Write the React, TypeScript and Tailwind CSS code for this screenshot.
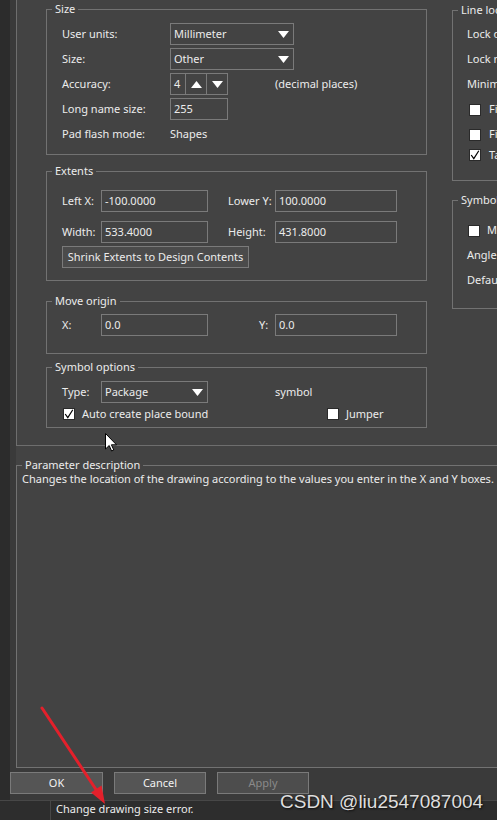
import React from "react";

function Group({
  title,
  className,
  children,
}: {
  title: string;
  className?: string;
  children: React.ReactNode;
}) {
  return (
    <fieldset className={`m-0 min-w-0 border border-[#727272] p-0 ${className ?? ""}`}>
      <legend className="ml-[5px] px-[3px] leading-[14px]">{title}</legend>
      {children}
    </fieldset>
  );
}

function Down() {
  return (
    <svg width="11" height="7" viewBox="0 0 11 7" className="shrink-0">
      <polygon points="0,0 11,0 5.5,7" fill="#ffffff" />
    </svg>
  );
}

function Up() {
  return (
    <svg width="11" height="7" viewBox="0 0 11 7" className="shrink-0">
      <polygon points="0,7 11,7 5.5,0" fill="#ffffff" />
    </svg>
  );
}

function Field({ value, className }: { value: string; className?: string }) {
  return (
    <div className={`flex h-[22px] items-center border border-[#7a7a7a] pl-[3px] ${className ?? ""}`}>
      {value}
    </div>
  );
}

function Combo({ value, className }: { value: string; className?: string }) {
  return (
    <div
      className={`flex h-[22px] items-center justify-between border border-[#7a7a7a] pl-[3px] pr-[4px] ${className ?? ""}`}
    >
      <span>{value}</span>
      <Down />
    </div>
  );
}

function Check({ checked, className }: { checked?: boolean; className?: string }) {
  return (
    <span
      className={`flex h-[12px] w-[12px] shrink-0 items-center justify-center border border-[#2a2a2a] bg-white ${className ?? ""}`}
    >
      {checked && (
        <svg width="10" height="10" viewBox="0 0 10 10">
          <polyline points="1.2,5 3.8,8.6 8.8,0.8" fill="none" stroke="#000" strokeWidth="1.2" />
        </svg>
      )}
    </span>
  );
}

function Btn({ label, disabled, className }: { label: string; disabled?: boolean; className?: string }) {
  return (
    <div
      className={`flex h-[22px] items-center justify-center border border-[#7a7a7a] ${
        disabled ? "bg-[#4d4d4d] text-[#8a8a8a]" : "bg-[#555555] text-[#f2f2f2]"
      } ${className ?? "w-[92px]"}`}
    >
      {label}
    </div>
  );
}

export default function App() {
  return (
    <div className="relative flex h-[820px] w-[497px] flex-col overflow-hidden bg-[#2c2c2c] font-['Noto_Sans',sans-serif] text-[11px] text-[#ececec]">
      <div className="flex h-[800px]">
        <div className="w-[10px] shrink-0 bg-[#2c2c2c]" />
        <div className="flex min-w-0 flex-1 flex-col bg-[#3a3a3a]">
          <div className="ml-[6px] flex h-[768px] flex-col overflow-hidden bg-[#434343]">
            {/* options page */}
            <div className="flex h-[446px] shrink-0 border-b border-l border-[#6e6e6e] pt-[2px]">
              <div className="ml-[29px] flex w-[381px] shrink-0 flex-col">
                <Group title="Size">
                  <div className="flex flex-col gap-[3px] px-[15px] pb-[9px] pt-[7px]">
                    <div className="flex h-[22px] items-center">
                      <span className="w-[108px]">User units:</span>
                      <Combo value="Millimeter" className="w-[124px]" />
                    </div>
                    <div className="flex h-[22px] items-center">
                      <span className="w-[108px]">Size:</span>
                      <Combo value="Other" className="w-[124px]" />
                    </div>
                    <div className="flex h-[22px] items-center">
                      <span className="w-[108px]">Accuracy:</span>
                      <div className="flex h-[22px] w-[58px] border border-[#7a7a7a]">
                        <span className="flex w-[14px] items-center pl-[3px]">4</span>
                        <span className="flex w-[21px] items-center justify-center border-l border-[#7a7a7a]">
                          <Up />
                        </span>
                        <span className="flex flex-1 items-center justify-center border-l border-[#7a7a7a]">
                          <Down />
                        </span>
                      </div>
                      <span className="ml-[47px]">(decimal places)</span>
                    </div>
                    <div className="flex h-[22px] items-center">
                      <span className="w-[108px]">Long name size:</span>
                      <Field value="255" className="w-[58px]" />
                    </div>
                    <div className="flex h-[22px] items-center">
                      <span className="w-[108px]">Pad flash mode:</span>
                      <span>Shapes</span>
                    </div>
                  </div>
                </Group>

                <Group title="Extents" className="mt-[9px]">
                  <div className="flex flex-col px-[15px] pb-[12px] pt-[12px]">
                    <div className="flex h-[22px] items-center">
                      <span className="w-[39px]">Left X:</span>
                      <Field value="-100.0000" className="w-[107px]" />
                      <span className="ml-[20px] w-[47px]">Lower Y:</span>
                      <Field value="100.0000" className="w-[122px]" />
                    </div>
                    <div className="mt-[9px] flex h-[22px] items-center">
                      <span className="w-[39px]">Width:</span>
                      <Field value="533.4000" className="w-[107px]" />
                      <span className="ml-[20px] w-[47px]">Height:</span>
                      <Field value="431.8000" className="w-[122px]" />
                    </div>
                    <div className="mt-[3px] flex h-[22px] w-[187px] items-center justify-center border border-[#7a7a7a] bg-[#4b4b4b]">
                      Shrink Extents to Design Contents
                    </div>
                  </div>
                </Group>

                <Group title="Move origin" className="mt-[13px]">
                  <div className="flex px-[15px] pb-[17px] pt-[6px]">
                    <div className="flex h-[22px] items-center">
                      <span className="w-[39px]">X:</span>
                      <Field value="0.0" className="w-[107px]" />
                      <span className="ml-[51px] w-[16px]">Y:</span>
                      <Field value="0.0" className="w-[122px]" />
                    </div>
                  </div>
                </Group>

                <Group title="Symbol options" className="mt-[6px]">
                  <div className="flex flex-col px-[15px] pb-[6px] pt-[7px]">
                    <div className="flex h-[22px] items-center">
                      <span className="w-[39px]">Type:</span>
                      <Combo value="Package" className="w-[107px]" />
                      <span className="ml-[67px]">symbol</span>
                    </div>
                    <div className="mt-[4px] flex h-[14px] items-center">
                      <Check checked className="ml-[1px]" />
                      <span className="ml-[7px] w-[245px]">Auto create place bound</span>
                      <Check />
                      <span className="ml-[7px]">Jumper</span>
                    </div>
                  </div>
                </Group>
              </div>

              <div className="ml-[25px] flex w-[200px] shrink-0 flex-col pt-[1px] whitespace-nowrap">
                <Group title="Line lock">
                  <div className="flex flex-col pb-[17px] pl-[14px] pt-[5px]">
                    <div className="flex h-[25px] items-center">Lock orthogonal</div>
                    <div className="flex h-[25px] items-center">Lock net</div>
                    <div className="flex h-[25px] items-center">Minimum length</div>
                    <div className="flex h-[25px] items-center">
                      <Check className="ml-[2px]" />
                      <span className="ml-[8px]">Fixed angle</span>
                    </div>
                    <div className="flex h-[25px] items-center">
                      <Check className="ml-[2px]" />
                      <span className="ml-[8px]">Fixed length</span>
                    </div>
                    <div className="flex h-[16px] items-center">
                      <Check checked className="ml-[2px]" />
                      <span className="ml-[8px]">Tack</span>
                    </div>
                  </div>
                </Group>
                <Group title="Symbol" className="mt-[12px]">
                  <div className="flex flex-col pb-[15px] pl-[14px] pt-[11px]">
                    <div className="flex h-[25px] items-center">
                      <Check className="ml-[1px]" />
                      <span className="ml-[7px]">Mirror</span>
                    </div>
                    <div className="flex h-[25px] items-center">Angle</div>
                    <div className="flex h-[25px] items-center">Default</div>
                  </div>
                </Group>
              </div>
            </div>

            <Group title="Parameter description" className="mt-[12px] w-[540px] flex-1">
              <div className="whitespace-nowrap pl-[5px] leading-[13px]">
                Changes the location of the drawing according to the values you enter in the X and Y boxes.
              </div>
            </Group>
          </div>

          <div className="flex flex-1 items-start gap-[11px] pt-[4px]">
            <Btn label="OK" className="w-[93px]" />
            <Btn label="Cancel" />
            <Btn label="Apply" disabled />
          </div>
        </div>
      </div>

      <div className="flex h-[20px] border-t border-[#474747] bg-[#2d2d2d]">
        <div className="w-[51px] border-r border-[#474747]" />
        <div className="flex items-center pb-[3px] pl-[5px]">Change drawing size error.</div>
      </div>

      {/* mouse pointer */}
      <svg className="absolute left-[105px] top-[433px]" width="14" height="20" viewBox="0 0 14 20">
        <path
          d="M0.5,0.5 L0.5,16 L4.2,12.5 L6.6,18 L8.8,17 L6.4,11.8 L11.5,11.8 Z"
          fill="#ffffff"
          stroke="#000000"
          strokeWidth="1"
        />
      </svg>

      {/* red annotation arrow */}
      <svg className="absolute left-0 top-0" width="497" height="820" viewBox="0 0 497 820">
        <line x1="42" y1="708" x2="97" y2="791" stroke="#e3202b" strokeWidth="3" strokeLinecap="round" />
        <polygon points="105,804 101.5,785.5 91,792.5" fill="#e3202b" />
      </svg>

      <div className="absolute left-[280px] top-[791px] font-['Liberation_Sans',Arial,sans-serif] text-[19px] leading-[22px] text-[#dedede] [text-shadow:1px_1px_2px_rgba(0,0,0,0.7)]">
        CSDN @liu2547087004
      </div>
    </div>
  );
}
